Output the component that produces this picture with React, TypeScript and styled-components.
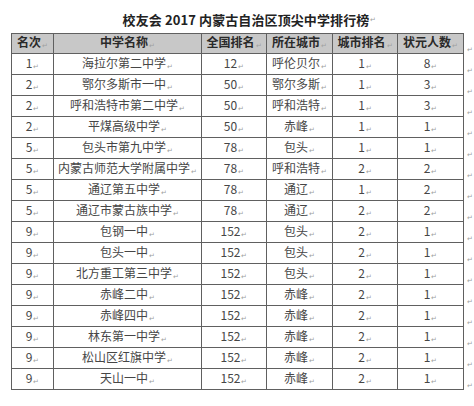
import React from "react";
import styled, { createGlobalStyle } from "styled-components";

const GlobalStyle = createGlobalStyle`
  html, body {
    margin: 0;
    padding: 0;
    background: #fff;
  }
  body {
    font-family: "Noto Sans CJK SC", "Noto Sans", sans-serif;
    color: #333;
  }
`;

const Page = styled.div`
  width: 474px;
  height: 406px;
  padding-left: 11px;
  box-sizing: border-box;
  overflow: hidden;
`;

const Title = styled.div`
  width: 452px;
  height: 33px;
  box-sizing: border-box;
  padding: 5px 0 0 25px;
  display: flex;
  align-items: center;
  justify-content: center;
  font-size: 13px;
  font-weight: 700;
  color: #222;
  letter-spacing: 0.1px;
`;

const Mark = styled.span`
  font-size: 7px;
  font-weight: 400;
  color: #a0a0a0;
  margin-left: 1px;
  vertical-align: -1px;
`;

const Table = styled.table`
  border-collapse: collapse;
  table-layout: fixed;
  width: 458px;
`;

const Row = styled.tr<{ $head?: boolean }>`
  height: ${(p) => (p.$head ? "20px" : "21px")};
  background: ${(p) => (p.$head ? "#c8c8c8" : "#fff")};
`;

const Cell = styled.td<{ $head?: boolean }>`
  border: 1px solid #606060;
  padding: 0;
  text-align: center;
  vertical-align: middle;
  font-size: 12px;
  line-height: 14px;
  white-space: nowrap;
  font-weight: ${(p) => (p.$head ? 700 : 400)};
  color: ${(p) => (p.$head ? "#2a2a2a" : "#464646")};
`;

const EndCell = styled.td`
  border: none;
  padding: 0 0 0 3px;
  vertical-align: bottom;
  background: #fff;
  font-size: 7px;
  line-height: 9px;
  color: #a0a0a0;
`;

const widths = [42, 148, 65, 66, 65, 66, 6];

const headers = ["名次", "中学名称", "全国排名", "所在城市", "城市排名", "状元人数"];

const rows: [string, string, string, string, string, string][] = [
  ["1", "海拉尔第二中学", "12", "呼伦贝尔", "1", "8"],
  ["2", "鄂尔多斯市一中", "50", "鄂尔多斯", "1", "3"],
  ["2", "呼和浩特市第二中学", "50", "呼和浩特", "1", "3"],
  ["2", "平煤高级中学", "50", "赤峰", "1", "1"],
  ["5", "包头市第九中学", "78", "包头", "1", "1"],
  ["5", "内蒙古师范大学附属中学", "78", "呼和浩特", "2", "2"],
  ["5", "通辽第五中学", "78", "通辽", "1", "2"],
  ["5", "通辽市蒙古族中学", "78", "通辽", "2", "2"],
  ["9", "包钢一中", "152", "包头", "2", "1"],
  ["9", "包头一中", "152", "包头", "2", "1"],
  ["9", "北方重工第三中学", "152", "包头", "2", "1"],
  ["9", "赤峰二中", "152", "赤峰", "2", "1"],
  ["9", "赤峰四中", "152", "赤峰", "2", "1"],
  ["9", "林东第一中学", "152", "赤峰", "2", "1"],
  ["9", "松山区红旗中学", "152", "赤峰", "2", "1"],
  ["9", "天山一中", "152", "赤峰", "2", "1"],
];

const App: React.FC = () => {
  return (
    <Page>
      <GlobalStyle />
      <Title>
        校友会 2017 内蒙古自治区顶尖中学排行榜<Mark>↵</Mark>
      </Title>
      <Table>
        <colgroup>
          {widths.map((w, i) => (
            <col key={i} style={{ width: w }} />
          ))}
        </colgroup>
        <tbody>
          <Row $head>
            {headers.map((h) => (
              <Cell key={h} $head>
                {h}
                <Mark>↵</Mark>
              </Cell>
            ))}
            <EndCell>↵</EndCell>
          </Row>
          {rows.map((r, i) => (
            <Row key={i}>
              {r.map((v, j) => (
                <Cell key={j}>
                  {v}
                  <Mark>↵</Mark>
                </Cell>
              ))}
              <EndCell>↵</EndCell>
            </Row>
          ))}
        </tbody>
      </Table>
    </Page>
  );
};

export default App;
